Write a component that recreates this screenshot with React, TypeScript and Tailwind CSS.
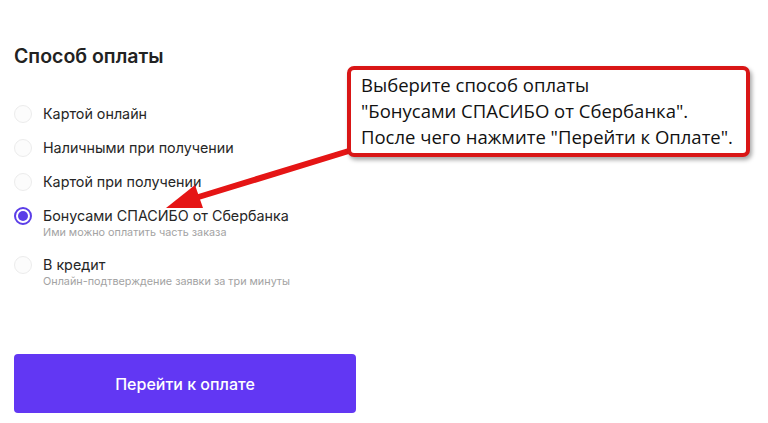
import React from "react";

const options = [
  { label: "Картой онлайн" },
  { label: "Наличными при получении" },
  { label: "Картой при получении" },
  { label: "Бонусами СПАСИБО от Сбербанка", sub: "Ими можно оплатить часть заказа", checked: true },
  { label: "В кредит", sub: "Онлайн-подтверждение заявки за три минуты" },
];

export default function App() {
  return (
    <div className="relative w-[768px] h-[423px] bg-white overflow-hidden" style={{ fontFamily: "Inter, 'Noto Sans', sans-serif" }}>
      <div className="pl-[14px] pt-[43px] w-[360px]">
        <h1 className="text-[19.5px] leading-[26px] font-semibold text-[#222]">Способ оплаты</h1>
        <div className="mt-[32px] flex flex-col">
          {options.map((o, i) => (
            <div key={i} className={`flex flex-col ${o.sub ? "h-[49px]" : "h-[34px]"}`}>
              <div className="flex items-center h-[26px]">
                {o.checked ? (
                  <div className="w-[18px] h-[18px] rounded-full border-[2px] border-[#5b3ee8] flex items-center justify-center">
                    <div className="w-[10px] h-[10px] rounded-full bg-[#5b3ee8]" />
                  </div>
                ) : (
                  <div className="w-[18px] h-[18px] rounded-full border border-[#ececec] bg-[#fcfcfc]" />
                )}
                <span className="ml-[11px] text-[14.3px] text-[#262626]">{o.label}</span>
              </div>
              {o.sub && (
                <span className="ml-[29px] -mt-[3px] text-[10.8px] leading-[14px] text-[#a3a3a3]">{o.sub}</span>
              )}
            </div>
          ))}
        </div>
        <button className="mt-[53px] w-[342px] h-[59px] rounded-[4px] bg-[#6237f3] text-white text-[16px] font-medium flex items-center justify-center">
          Перейти к оплате
        </button>
      </div>

      <svg className="absolute left-0 top-0 pointer-events-none" width="768" height="423">
        <line x1="352" y1="150" x2="192" y2="199" stroke="#e51515" strokeWidth="6" strokeLinecap="round" />
        <polygon points="166,208 195,185 203,208" fill="#e51515" />
      </svg>

      <div
        className="absolute left-[347px] top-[66px] w-[403px] h-[91px] border-[4px] border-[#d91616] rounded-[7px] bg-white shadow-[2px_3px_4px_rgba(0,0,0,0.35)] pl-[10px] pt-[2px] text-[18.5px] leading-[26px] text-[#111]"
        style={{ fontFamily: "'Open Sans', 'Noto Sans', sans-serif" }}
      >
        <div>Выберите способ оплаты</div>
        <div>"Бонусами СПАСИБО от Сбербанка".</div>
        <div>После чего нажмите "Перейти к Оплате".</div>
      </div>
    </div>
  );
}
